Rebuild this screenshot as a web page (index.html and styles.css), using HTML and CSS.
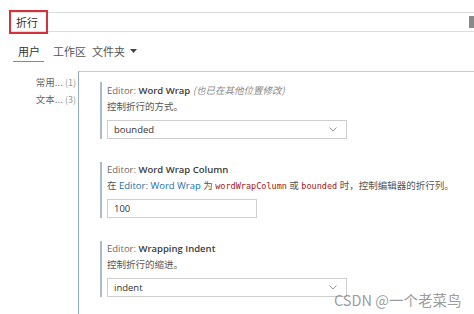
FILE: index.html
```html
<!DOCTYPE html>
<html lang="zh-CN">
<head>
<meta charset="utf-8">
<title>Settings</title>
<link rel="stylesheet" href="styles.css">
</head>
<body>
<div class="page">
  <div class="search">
    <span class="hl">折行</span>
    <span class="search-icon"></span>
  </div>
  <div class="tabs">
    <span class="tab active">用户</span>
    <span class="tab">工作区</span>
    <span class="tab folder">文件夹 <svg class="caret" width="7" height="4" viewBox="0 0 7 4"><path d="M0 0h7L3.5 4z" fill="#444"/></svg></span>
  </div>
  <div class="body">
    <div class="toc">
      <div class="toc-item">常用... <span class="count">(1)</span></div>
      <div class="toc-item">文本... <span class="count">(3)</span></div>
    </div>
    <div class="panel">
      <div class="setting">
        <div class="title first">Editor: <b>Word Wrap</b> <i class="mod">(也已在其他位置修改)</i></div>
        <div class="desc">控制折行的方式。</div>
        <div class="select">bounded<svg class="chev" width="8" height="5" viewBox="0 0 8 5"><path d="M0.5 0.5L4 4l3.5-3.5" fill="none" stroke="#888" stroke-width="0.9"/></svg></div>
      </div>
      <div class="setting">
        <div class="title">Editor: <b>Word Wrap Column</b></div>
        <div class="desc">在 <span class="link">Editor: Word Wrap</span> 为 <code>wordWrapColumn</code> 或 <code>bounded</code> 时，控制编辑器的折行列。</div>
        <div class="input">100</div>
      </div>
      <div class="setting">
        <div class="title">Editor: <b>Wrapping Indent</b></div>
        <div class="desc">控制折行的缩进。</div>
        <div class="select">indent<svg class="chev" width="8" height="5" viewBox="0 0 8 5"><path d="M0.5 0.5L4 4l3.5-3.5" fill="none" stroke="#888" stroke-width="0.9"/></svg></div>
      </div>
    </div>
  </div>
  <div class="watermark">CSDN @一个老菜鸟</div>
</div>
</body>
</html>
```
FILE: styles.css
```css
html, body {
  margin: 0;
  padding: 0;
  background: #fff;
  overflow: hidden;
}
.page {
  position: relative;
  width: 474px;
  height: 314px;
  padding-top: 12px;
  box-sizing: border-box;
  overflow: hidden;
  font-family: "Open Sans", "Noto Sans CJK SC", sans-serif;
  color: #333;
}
.search {
  margin-left: 10px;
  height: 18px;
  border-top: 1px solid #dcdcdc;
  border-bottom: 1px solid #dcdcdc;
  display: flex;
  align-items: center;
  justify-content: space-between;
  font-size: 11px;
  font-family: "Noto Sans CJK SC", sans-serif;
}
.hl {
  margin-left: -1px;
  padding: 3px 8px 3px 5px;
  border: 2px solid #d6313c;
  line-height: 14px;
  color: #333;
}
.search-icon {
  width: 5px;
  height: 12px;
  background: #8a8a8a;
}
.tabs {
  display: flex;
  gap: 4px;
  margin: 9px 0 0 13px;
  font-family: "Noto Sans CJK SC", sans-serif;
  font-size: 11px;
  color: #555;
}
.tab {
  padding: 0 4px 1px 5px;
  line-height: 18px;
  height: 19px;
  border-bottom: 1px solid transparent;
  display: flex;
  align-items: center;
  gap: 5px;
}
.tab.folder { margin-left: -7px; }
.tab.active {
  color: #333;
  border-bottom-color: #888;
}
.caret { margin-top: 1px; }
.body {
  display: flex;
  margin-top: 9px;
}
.toc {
  width: 78px;
  flex: none;
  padding-top: 3px;
  font-family: "Noto Sans CJK SC", sans-serif;
  font-size: 9.5px;
  color: #666;
  text-align: right;
  box-sizing: border-box;
  padding-right: 2px;
}
.toc-item {
  line-height: 16px;
  white-space: nowrap;
}
.count { color: #999; font-size: 9px; }
.panel {
  flex: 1;
  border-top: 1px solid #b9cfe0;
  border-left: 1px solid #8fb0c4;
  padding: 10px 0 0 21px;
  height: 260px;
}
.setting {
  border-left: 2px solid #a7bccd;
  padding-left: 5px;
  margin-bottom: 23px;
}
.title {
  font-size: 9.5px;
  line-height: 16px;
  color: #6a6a6a;
  white-space: nowrap;
}
.title.first { line-height: 17px; }
.title b { color: #3c3c3c; font-weight: 600; }
.mod { color: #8a8a8a; font-family: "Noto Sans CJK SC", sans-serif; font-size: 9.5px; }
.desc {
  font-size: 9.5px;
  line-height: 16px;
  color: #555;
  white-space: nowrap;
}
.link { color: #1a6fb0; }
code {
  font-family: "DejaVu Sans Mono", monospace;
  font-size: 8.5px;
  color: #a31515;
}
.select, .input {
  margin-top: 5px;
  height: 17px;
  border: 1px solid #cecece;
  font-size: 9.5px;
  line-height: 17px;
  color: #333;
  padding-left: 6px;
  display: flex;
  align-items: center;
  justify-content: space-between;
}
.select { width: 232px; }
.input { width: 142px; }
.chev { margin-right: 9px; }
.watermark {
  position: absolute;
  left: 334px;
  top: 290px;
  font-family: "Noto Sans CJK SC", sans-serif;
  font-size: 14.5px;
  line-height: 20px;
  color: rgba(130, 130, 130, 0.8);
  white-space: nowrap;
}
```
